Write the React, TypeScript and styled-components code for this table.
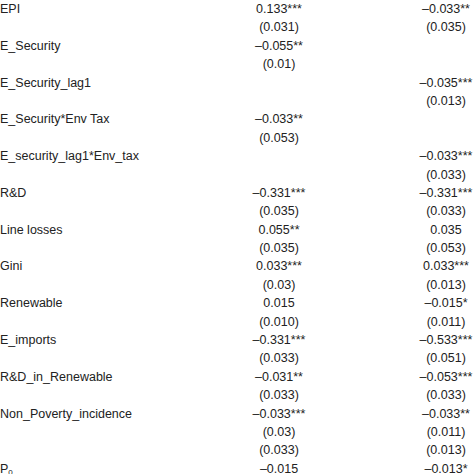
import React from "react";
import styled, { createGlobalStyle } from "styled-components";

const GlobalStyle = createGlobalStyle`
  html, body {
    margin: 0;
    padding: 0;
    background: #ffffff;
    overflow: hidden;
  }
  body {
    width: 474px;
    height: 474px;
  }
`;

const Table = styled.div`
  display: grid;
  grid-template-columns: 212px 134px 200px;
  grid-auto-rows: 18.4px;
  font-family: "Liberation Sans", Arial, sans-serif;
  font-size: 12.5px;
  line-height: 18.4px;
  color: #222222;
`;

const Label = styled.div`
  white-space: nowrap;
  text-align: left;
`;

const Value = styled.div`
  white-space: nowrap;
  text-align: center;
`;

const Sub = styled.sub`
  font-size: 8px;
  line-height: 0;
  vertical-align: -2px;
`;

type Cell = { coef?: string; se?: string };
type Entry = { label: string; sub?: string; cells: [Cell, Cell] };

const rows: Entry[] = [
  { label: "EPI", cells: [{ coef: "0.133***", se: "(0.031)" }, { coef: "–0.033**", se: "(0.035)" }] },
  { label: "E_Security", cells: [{ coef: "–0.055**", se: "(0.01)" }, {}] },
  { label: "E_Security_lag1", cells: [{}, { coef: "–0.035***", se: "(0.013)" }] },
  { label: "E_Security*Env Tax", cells: [{ coef: "–0.033**", se: "(0.053)" }, {}] },
  { label: "E_security_lag1*Env_tax", cells: [{}, { coef: "–0.033***", se: "(0.033)" }] },
  { label: "R&D", cells: [{ coef: "–0.331***", se: "(0.035)" }, { coef: "–0.331***", se: "(0.033)" }] },
  { label: "Line losses", cells: [{ coef: "0.055**", se: "(0.035)" }, { coef: "0.035", se: "(0.053)" }] },
  { label: "Gini", cells: [{ coef: "0.033***", se: "(0.03)" }, { coef: "0.033***", se: "(0.013)" }] },
  { label: "Renewable", cells: [{ coef: "0.015", se: "(0.010)" }, { coef: "–0.015*", se: "(0.011)" }] },
  { label: "E_imports", cells: [{ coef: "–0.331***", se: "(0.033)" }, { coef: "–0.533***", se: "(0.051)" }] },
  { label: "R&D_in_Renewable", cells: [{ coef: "–0.031**", se: "(0.033)" }, { coef: "–0.053***", se: "(0.033)" }] },
  { label: "Non_Poverty_incidence", cells: [{ coef: "–0.033***", se: "(0.03)" }, { coef: "–0.033**", se: "(0.011)" }] },
  { label: "", cells: [{ coef: "(0.033)" }, { coef: "(0.013)" }] },
  { label: "P", sub: "0", cells: [{ coef: "–0.015" }, { coef: "–0.013*" }] },
];

export default function App() {
  return (
    <>
      <GlobalStyle />
      <Table>
        {rows.map((row, i) => {
          const hasSe = Boolean(row.cells[0].se || row.cells[1].se);
          return (
            <React.Fragment key={i}>
              <Label>
                {row.label}
                {row.sub && <Sub>{row.sub}</Sub>}
              </Label>
              <Value>{row.cells[0].coef ?? ""}</Value>
              <Value>{row.cells[1].coef ?? ""}</Value>
              {hasSe && (
                <>
                  <Label />
                  <Value>{row.cells[0].se ?? ""}</Value>
                  <Value>{row.cells[1].se ?? ""}</Value>
                </>
              )}
            </React.Fragment>
          );
        })}
      </Table>
    </>
  );
}
